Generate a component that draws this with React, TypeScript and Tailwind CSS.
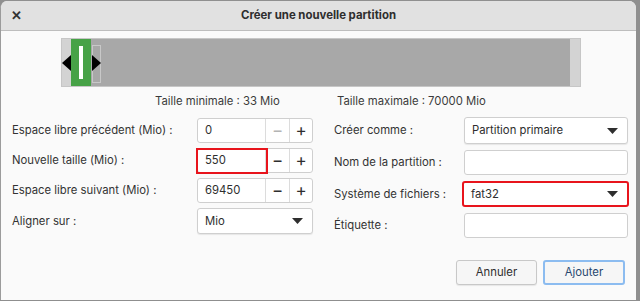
import React from "react";

function Arrow() {
  return (
    <svg width="11" height="6" viewBox="0 0 11 6" className="shrink-0">
      <path d="M0 0h11L5.5 6z" fill="#2e2e2e" />
    </svg>
  );
}

function SpinField({
  value,
  highlight = false,
  minusDisabled = false,
}: {
  value: string;
  highlight?: boolean;
  minusDisabled?: boolean;
}) {
  return (
    <div className="relative flex h-[25px] w-[116px] rounded-[3px] border border-[#cfcfcf] bg-white">
      <div className="flex flex-1 items-center pl-[7px] text-[#2e2e2e]">{value}</div>
      <div
        className={`flex w-[24px] items-center justify-center border-l border-[#dcdcdc] text-[17px] leading-none ${
          minusDisabled ? "text-[#b4b4b4]" : "text-[#2e2e2e]"
        }`}
      >
        −
      </div>
      <div className="flex w-[23px] items-center justify-center border-l border-[#dcdcdc] text-[17px] leading-none text-[#2e2e2e]">
        +
      </div>
      {highlight && (
        <div className="pointer-events-none absolute left-[-2px] top-[-1px] h-[26px] w-[72px] border-2 border-[#e8141c]" />
      )}
    </div>
  );
}

function Combo({ value, w, h, highlight = false }: { value: string; w: string; h: string; highlight?: boolean }) {
  return (
    <div
      className={`flex items-center justify-between rounded-[3px] bg-white pl-[7px] pr-[9px] text-[#2e2e2e] ${w} ${h} ${
        highlight ? "border-2 border-[#e8141c]" : "border border-[#cfcfcf] shadow-[0_1px_1px_rgba(0,0,0,0.08)]"
      }`}
    >
      <span>{value}</span>
      <Arrow />
    </div>
  );
}

function Entry({ h }: { h: string }) {
  return <div className={`w-[164px] rounded-[3px] border border-[#cfcfcf] bg-white ${h}`} />;
}

function PartitionBar() {
  return (
    <div className="relative ml-[60px] mt-[7px] flex h-[49px] w-[520px] border border-[#c6c6c6] bg-[#d3d3d3]">
      <div className="w-[9px]" />
      <div className="flex w-[20px] items-center justify-center bg-[#47a247]">
        <div className="h-[33px] w-[4px] bg-white" />
      </div>
      <div className="flex-1 bg-[#a8a8a8]" />
      <div className="w-[10px]" />
      <div className="absolute left-[30px] top-[6px] h-[38px] w-[9px] border border-[#c8c8c8]" />
      <svg className="absolute left-0 top-[16px]" width="40" height="16" viewBox="0 0 40 16">
        <path d="M0 8L9 0v16z" fill="#000" />
        <path d="M39 8L30 0v16z" fill="#000" />
      </svg>
    </div>
  );
}

export default function App() {
  return (
    <div
      className="h-[301px] w-[640px] overflow-hidden bg-[#8f8f8f] text-[11.3px]"
      style={{ fontFamily: "Inter, 'Noto Sans', sans-serif" }}
    >
      <div className="mt-[1px] flex h-[299px] w-[636px] flex-col overflow-hidden rounded-t-[7px] border-l border-[#9b9b9b] bg-[#fafafa]">
        <div className="flex h-[30px] shrink-0 items-center border-b border-[#bdbdbd] bg-[#e1e1e1]">
          <div className="flex w-[30px] items-center justify-center text-[13px] font-bold text-[#333]">✕</div>
          <div className="flex-1 pr-[30px] text-center text-[11.4px] font-bold text-[#2e2e2e]">
            Créer une nouvelle partition
          </div>
        </div>

        <PartitionBar />

        <div className="mt-[6px] flex h-[16px] items-center text-[#3a3a3a]">
          <div className="ml-[154px] w-[182px]">Taille minimale : 33 Mio</div>
          <div>Taille maximale : 70000 Mio</div>
        </div>

        <div className="mt-[9px] flex">
          <div className="ml-[11px] flex w-[301px] flex-col gap-[5px] text-[#333]">
            <div className="flex items-center justify-between">
              <span>Espace libre précédent (Mio) :</span>
              <SpinField value="0" minusDisabled />
            </div>
            <div className="flex items-center justify-between">
              <span>Nouvelle taille (Mio) :</span>
              <SpinField value="550" highlight />
            </div>
            <div className="flex items-center justify-between">
              <span>Espace libre suivant (Mio) :</span>
              <SpinField value="69450" />
            </div>
            <div className="flex items-center justify-between">
              <span>Aligner sur :</span>
              <Combo value="Mio" w="w-[116px]" h="h-[26px]" />
            </div>
          </div>

          <div className="-mt-[1px] ml-[21px] flex w-[294px] flex-col gap-[6px] text-[#333]">
            <div className="flex items-center justify-between">
              <span>Créer comme :</span>
              <Combo value="Partition primaire" w="w-[164px]" h="h-[27px]" />
            </div>
            <div className="flex items-center justify-between">
              <span>Nom de la partition :</span>
              <Entry h="h-[25px]" />
            </div>
            <div className="flex items-center justify-between">
              <span>Système de fichiers :</span>
              <div className="-mr-[1px]">
                <Combo value="fat32" w="w-[167px]" h="h-[26px]" highlight />
              </div>
            </div>
            <div className="flex items-center justify-between">
              <span>Étiquette :</span>
              <Entry h="h-[25px]" />
            </div>
          </div>
        </div>

        <div className="mr-[11px] mt-[22px] flex justify-end gap-[6px]">
          <div className="flex h-[25px] w-[81px] items-center justify-center rounded-[3px] border border-[#c8c8c8] bg-[#f6f6f6] text-[#2e2e2e] shadow-[0_1px_1px_rgba(0,0,0,0.08)]">
            Annuler
          </div>
          <div className="flex h-[25px] w-[82px] items-center justify-center rounded-[3px] border-2 border-[#8cbcf0] bg-[#f6f6f6] text-[#27476f]">
            Ajouter
          </div>
        </div>
      </div>
    </div>
  );
}
